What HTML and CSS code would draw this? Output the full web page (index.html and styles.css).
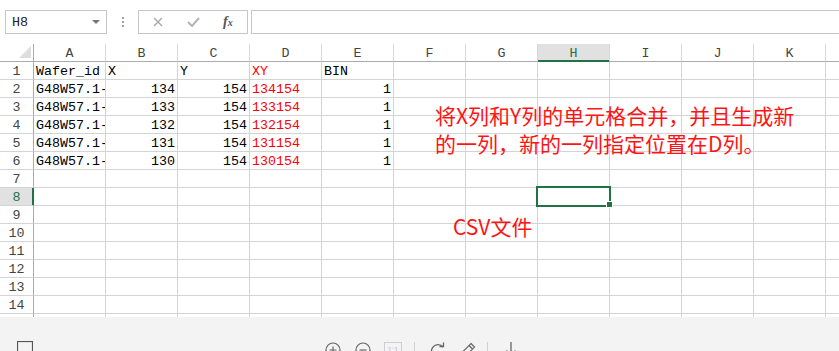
FILE: index.html
```
<!DOCTYPE html>
<html lang="zh-CN">
<head>
    <meta charset="UTF-8">
    <meta name="viewport" content="width=device-width, initial-scale=1.0">
    <title>CSV 合并列</title>
    <link rel="stylesheet" href="styles.css">
</head>
<body>
    <div class="formula-bar">
        <div class="name-box">
            <span>H8</span>
            <span class="caret"></span>
        </div>
        <div class="dots"><i></i><i></i><i></i></div>
        <div class="fx-box">
            <svg class="btn-cancel" width="10" height="10" viewBox="0 0 10 10">
                <path d="M1 1 L9 9 M9 1 L1 9" stroke="#a8a8a8" stroke-width="1.4" fill="none"/>
            </svg>
            <svg class="btn-enter" width="13" height="10" viewBox="0 0 13 10">
                <path d="M1 5 L5 9 L12 1" stroke="#b4b4b4" stroke-width="2" fill="none"/>
            </svg>
            <span class="fx">f<small>x</small></span>
        </div>
        <div class="formula-input"></div>
    </div>

    <div class="sheet">
        <div class="grid" id="grid"></div>

        <div class="selection"><span class="handle"></span></div>

        <p class="note note-main">将X列和Y列的单元格合并，并且生成新<br>的一列，新的一列指定位置在D列。</p>
        <p class="note note-file">CSV文件</p>
    </div>

    <div class="status-bar">
        <svg class="ico-sheet" width="16" height="14" viewBox="0 0 16 14">
            <rect x="0.5" y="0.5" width="15" height="14" fill="none" stroke="#555" stroke-width="1.2"/>
        </svg>
        <div class="viewer-tools">
            <svg class="tool t-zoom-in" width="16" height="16" viewBox="0 0 16 16">
                <circle cx="8" cy="8" r="7" fill="none" stroke="#666" stroke-width="1.2"/>
                <path d="M8 4.5 V11.5 M4.5 8 H11.5" stroke="#666" stroke-width="1.2"/>
            </svg>
            <svg class="tool t-zoom-out" width="16" height="16" viewBox="0 0 16 16">
                <circle cx="8" cy="8" r="7" fill="none" stroke="#666" stroke-width="1.2"/>
                <path d="M4.5 8 H11.5" stroke="#666" stroke-width="1.2"/>
            </svg>
            <span class="tool t-actual">1:1</span>
            <span class="tool sep"></span>
            <svg class="tool t-rotate" width="16" height="16" viewBox="0 0 16 16">
                <path d="M13 5 A6.5 6.5 0 1 0 14.5 9" fill="none" stroke="#666" stroke-width="1.3"/>
                <path d="M9.5 4.5 H13.5 V0.5" fill="none" stroke="#666" stroke-width="1.3"/>
            </svg>
            <svg class="tool t-edit" width="16" height="16" viewBox="0 0 16 16">
                <path d="M11 1.5 L14.5 5 L5 14.5 L1.5 14.5 L1.5 11 Z M9 3.5 L12.5 7" fill="none" stroke="#666" stroke-width="1.2"/>
            </svg>
            <span class="tool sep sep-2"></span>
            <svg class="tool t-download" width="14" height="16" viewBox="0 0 14 16">
                <path d="M7 0 V13 M2.5 8.5 L7 13 L11.5 8.5" fill="none" stroke="#666" stroke-width="1.3"/>
            </svg>
        </div>
    </div>

    <script>
        // rows of the csv, [text, class]
        const data = {
            1: [['Wafer_id'], ['X'], ['Y'], ['XY', 'red'], ['BIN']],
            2: [['G48W57.1-'], ['134', 'num'], ['154', 'num'], ['134154', 'red'], ['1', 'num']],
            3: [['G48W57.1-'], ['133', 'num'], ['154', 'num'], ['133154', 'red'], ['1', 'num']],
            4: [['G48W57.1-'], ['132', 'num'], ['154', 'num'], ['132154', 'red'], ['1', 'num']],
            5: [['G48W57.1-'], ['131', 'num'], ['154', 'num'], ['131154', 'red'], ['1', 'num']],
            6: [['G48W57.1-'], ['130', 'num'], ['154', 'num'], ['130154', 'red'], ['1', 'num']]
        };
        const cols = 'ABCDEFGHIJKL'.split('');
        const grid = document.getElementById('grid');

        function addCell(cls, text) {
            const div = document.createElement('div');
            div.className = cls;
            if (text) div.textContent = text;
            grid.appendChild(div);
        }

        addCell('corner');
        cols.forEach((c) => addCell(c === 'H' ? 'col-head active' : 'col-head', c));

        for (let r = 1; r <= 15; r++) {
            addCell(r === 8 ? 'row-head active' : 'row-head', String(r));
            const row = data[r] || [];
            cols.forEach((c, i) => {
                const cell = row[i];
                addCell(cell && cell[1] ? 'cell ' + cell[1] : 'cell', cell ? cell[0] : '');
            });
        }
    </script>
</body>
</html>
```

FILE: styles.css
```
body {
    margin: 0;
    background-color: #fff;
    font-family: "Liberation Mono", "DejaVu Sans Mono", monospace;
    overflow: hidden;
    width: 839px;
    height: 351px;
}

/* formula bar */

.formula-bar {
    display: flex;
    align-items: center;
    height: 24px;
    padding: 10px 0 10px 5px;
}

.name-box {
    box-sizing: border-box;
    display: flex;
    align-items: center;
    width: 102px;
    height: 24px;
    border: 1px solid #c6c6c6;
    padding-left: 6px;
    font-size: 13.4px;
    color: #222;
}

.caret {
    margin-left: auto;
    margin-right: 6px;
    border-left: 4px solid transparent;
    border-right: 4px solid transparent;
    border-top: 4px solid #777;
}

.dots {
    display: flex;
    flex-direction: column;
    gap: 2px;
    margin-left: 15px;
    width: 2px;
}

.dots i {
    display: block;
    width: 2px;
    height: 2px;
    background-color: #a0a0a0;
}

.fx-box {
    box-sizing: border-box;
    display: flex;
    align-items: center;
    width: 110px;
    height: 24px;
    margin-left: 14px;
    border: 1px solid #c6c6c6;
}

.btn-cancel {
    margin-left: 14px;
}

.btn-enter {
    margin-left: 24px;
}

.fx {
    margin-left: 23px;
    font-family: "Liberation Serif", serif;
    font-style: italic;
    font-weight: bold;
    font-size: 14px;
    color: #555;
}

.fx small {
    font-size: 10px;
}

.formula-input {
    flex: 1;
    height: 24px;
    box-sizing: border-box;
    margin-left: 3px;
    border: 1px solid #c6c6c6;
    border-right: none;
}

/* sheet */

.sheet {
    position: relative;
    height: 273px;
    overflow: hidden;
}

.grid {
    display: grid;
    grid-template-columns: 34px repeat(12, 72px);
    grid-auto-rows: 18px;
    font-size: 13.34px;
    line-height: 14px;
}

.grid > div {
    box-sizing: border-box;
    padding-top: 3px;
    white-space: nowrap;
    overflow: hidden;
}

.corner {
    display: flex;
    justify-content: flex-end;
    align-items: flex-end;
    border-right: 1px solid #ababab;
    border-bottom: 1px solid #ababab;
}

.corner::after {
    content: "";
    margin: 0 2px 3px 0;
    border-left: 12px solid transparent;
    border-bottom: 12px solid #dedede;
}

.col-head {
    text-align: center;
    color: #444;
    border-right: 1px solid #d8d8d8;
    border-bottom: 1px solid #ababab;
}

.col-head.active {
    background-color: #e1e1e1;
    color: #217346;
    border-bottom-color: #217346;
    box-shadow: inset 0 -1px 0 #217346;
}

.row-head {
    text-align: center;
    color: #444;
    border-right: 1px solid #ababab;
    border-bottom: 1px solid #d4d4d4;
}

.row-head.active {
    background-color: #e1e1e1;
    color: #217346;
    border-right-color: #217346;
    box-shadow: inset -1px 0 0 #217346;
}

.cell {
    padding: 0 2px;
    color: #000;
    border-right: 1px solid #d4d4d4;
    border-bottom: 1px solid #d4d4d4;
}

.cell.num {
    text-align: right;
}

.cell.red {
    color: #f00;
}

.selection {
    position: absolute;
    left: 536px;
    top: 142px;
    width: 75px;
    height: 21px;
    box-sizing: border-box;
    border: 2px solid #217346;
}

.handle {
    position: absolute;
    right: -4px;
    bottom: -3px;
    width: 5px;
    height: 5px;
    background-color: #217346;
    border: 1px solid #fff;
}

.note {
    position: absolute;
    margin: 0;
    font-family: "Noto Sans CJK SC", sans-serif;
    font-size: 21px;
    line-height: 28px;
    color: #ff1414;
    white-space: nowrap;
}

.note-main {
    left: 435px;
    top: 57px;
}

.note-file {
    left: 453px;
    top: 168px;
}

/* bottom bar */

.status-bar {
    display: flex;
    align-items: flex-start;
    height: 34px;
    box-sizing: border-box;
    padding: 24px 0 0 17px;
    background-color: #f3f3f3;
    overflow: hidden;
}

.viewer-tools {
    display: flex;
    align-items: flex-start;
    margin-left: 292px;
    padding-top: 1px;
}

.tool {
    flex-shrink: 0;
}

.t-zoom-out {
    margin-left: 14px;
}

.t-actual {
    box-sizing: border-box;
    width: 18px;
    height: 16px;
    margin-left: 13px;
    border: 1px solid #cfcfcf;
    font-family: "Liberation Sans", sans-serif;
    font-size: 8px;
    line-height: 14px;
    text-align: center;
    color: #c4c4c4;
}

.sep {
    width: 1px;
    height: 16px;
    margin-left: 12px;
    background-color: #d0d0d0;
}

.t-rotate {
    margin-left: 15px;
}

.t-edit {
    margin-left: 14px;
}

.sep-2 {
    margin-left: 11px;
}

.t-download {
    margin-left: 16px;
}
```
